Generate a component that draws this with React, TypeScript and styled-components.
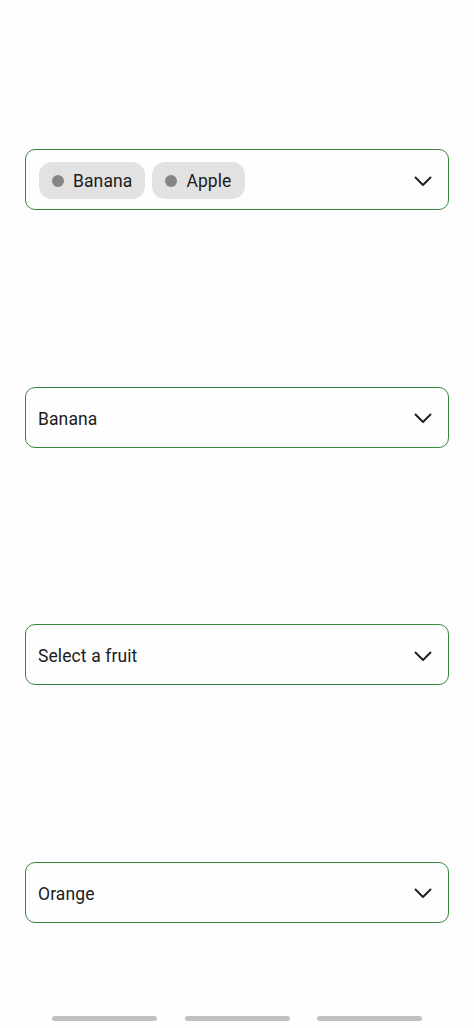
import React from "react";
import styled, { createGlobalStyle } from "styled-components";

const Global = createGlobalStyle`
  html, body { margin: 0; padding: 0; background: #fefefe; }
  body { font-family: Roboto, "Noto Sans", sans-serif; color: #1c1c1c; }
`;

const Page = styled.div`
  width: 474px;
  height: 1028px;
  box-sizing: border-box;
  padding: 149px 25px 0 25px;
  display: flex;
  flex-direction: column;
  gap: 176.5px;
  position: relative;
`;

const Field = styled.div`
  height: 61px;
  box-sizing: border-box;
  border: 1.6px solid #378737;
  border-radius: 10px;
  background: #fefefe;
  display: flex;
  align-items: center;
  padding: 2px 16px 0 12px;
`;

const Content = styled.div`
  flex: 1;
  display: flex;
  align-items: center;
  gap: 7px;
  font-size: 17.5px;
  letter-spacing: 0.1px;
`;

const Chip = styled.div`
  height: 37px;
  display: flex;
  align-items: center;
  gap: 9px;
  padding: 0 13px 0 13px;
  border-radius: 13px;
  background: #e2e2e2;
  font-size: 17.5px;
  color: #1c1c1c;
  &:first-child { margin-left: 1px; }
`;

const Dot = styled.span`
  width: 12px;
  height: 12px;
  border-radius: 50%;
  background: #858585;
`;

const Value = styled.span`
  padding-top: 1px;
`;

const Chevron = () => (
  <svg width="18" height="12" viewBox="0 0 18 12" fill="none">
    <path d="M1.5 2.5 L9 10 L16.5 2.5" stroke="#222" strokeWidth="2" strokeLinecap="round" strokeLinejoin="round" />
  </svg>
);

const NavBars = styled.div`
  position: absolute;
  left: 52px;
  right: 52px;
  top: 1016px;
  display: flex;
  justify-content: space-between;
`;

const NavBar = styled.div`
  width: 105px;
  height: 5px;
  border-radius: 3px;
  background: #c1c1c1;
`;

export default function App() {
  return (
    <>
      <Global />
      <Page>
        <Field>
          <Content>
            <Chip><Dot />Banana</Chip>
            <Chip><Dot />Apple</Chip>
          </Content>
          <Chevron />
        </Field>
        <Field>
          <Content><Value>Banana</Value></Content>
          <Chevron />
        </Field>
        <Field>
          <Content><Value>Select a fruit</Value></Content>
          <Chevron />
        </Field>
        <Field>
          <Content><Value>Orange</Value></Content>
          <Chevron />
        </Field>
        <NavBars>
          <NavBar />
          <NavBar />
          <NavBar />
        </NavBars>
      </Page>
    </>
  );
}
